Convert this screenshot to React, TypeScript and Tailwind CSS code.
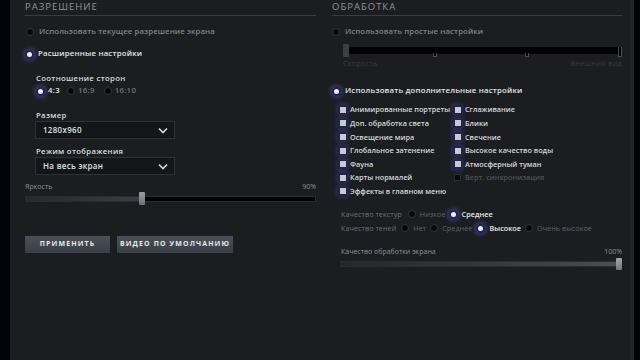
import React from "react";

const F = { fontFamily: '"Open Sans", "Noto Sans", sans-serif' };

function Radio({ on }: { on?: boolean }) {
  if (on)
    return (
      <span className="relative flex h-[9px] w-[9px] shrink-0 items-center justify-center rounded-full bg-[#23244a] shadow-[0_0_4px_2px_rgba(95,95,210,0.45)]">
        <span className="h-[5px] w-[5px] rounded-full bg-[#eceefa]" />
      </span>
    );
  return <span className="h-[8px] w-[8px] shrink-0 rounded-full border border-[#35373c] bg-[#050506]" />;
}

function Check({ on = true }: { on?: boolean }) {
  if (on)
    return (
      <span className="flex h-[9px] w-[9px] shrink-0 items-center justify-center bg-[#20224a] shadow-[0_0_4px_1px_rgba(80,80,190,0.45)]">
        <span className="h-[6px] w-[6px] bg-[#c8cad2]" />
      </span>
    );
  return (
    <span className="flex h-[9px] w-[9px] shrink-0 items-center justify-center">
      <span className="h-[7px] w-[7px] border border-[#2a2c30] bg-[#08090a]" />
    </span>
  );
}

function Chevron() {
  return (
    <svg width="10" height="7" viewBox="0 0 10 7" className="shrink-0">
      <path d="M1 1.5 L5 5.5 L9 1.5" stroke="#d8dadd" strokeWidth="1.6" fill="none" />
    </svg>
  );
}

function Select({ text }: { text: string }) {
  return (
    <div className="ml-[10px] flex h-[18px] w-[140px] items-center justify-between border border-[#2f3136] bg-[#141519] pl-[7px] pr-[6px]">
      <span className="text-[8px] font-semibold tracking-[0.3px] text-[#dfe1e4]">{text}</span>
      <Chevron />
    </div>
  );
}

const leftChecks = [
  "Анимированные портреты",
  "Доп. обработка света",
  "Освещение мира",
  "Глобальное затенение",
  "Фауна",
  "Карты нормалей",
  "Эффекты в главном меню",
];
const rightChecks = ["Сглаживание", "Блики", "Свечение", "Высокое качество воды", "Атмосферный туман"];

export default function App() {
  return (
    <div className="flex h-[360px] w-[640px] overflow-hidden bg-[#000307]" style={F}>
      <div className="w-[10px] shrink-0 bg-[#010409]" />
      <div className="flex flex-1 gap-[16px] bg-[#1c1d21] pl-[15px] pr-[8px]">
        {/* LEFT */}
        <div className="flex w-[291px] shrink-0 flex-col">
          <div className="h-[16px] border-b border-[#3a3c41]">
            <div className="pt-[1px] text-[9.5px] leading-[12px] tracking-[1px] text-[#8f9399]">РАЗРЕШЕНИЕ</div>
          </div>
          <div className="mt-[11px] flex h-[10px] items-center gap-[5px] pl-[1px]">
            <Radio />
            <span className="text-[7.8px] font-semibold tracking-[0.1px] text-[#7f8288]">
              Использовать текущее разрешение экрана
            </span>
          </div>
          <div className="mt-[12px] flex h-[10px] items-center gap-[4px] pl-[0px]">
            <Radio on />
            <span className="text-[7.8px] font-semibold tracking-[0.2px] text-[#e3e5e8]">Расширенные настройки</span>
          </div>
          <div className="mt-[14px] h-[10px] pl-[11px] text-[7.8px] font-semibold leading-[10px] tracking-[0.3px] text-[#d9dbde]">
            Соотношение сторон
          </div>
          <div className="mt-[3px] flex h-[10px] items-center pl-[11px] text-[7.8px] font-semibold tracking-[0.3px]">
            <Radio on />
            <span className="ml-[3px] text-[#e3e5e8]">4:3</span>
            <span className="ml-[7px]" />
            <Radio />
            <span className="ml-[3px] text-[#6f7278]">16:9</span>
            <span className="ml-[9px]" />
            <Radio />
            <span className="ml-[3px] text-[#6f7278]">16:10</span>
          </div>
          <div className="mt-[14px] h-[10px] pl-[11px] text-[7.8px] font-semibold leading-[10px] tracking-[0.3px] text-[#d9dbde]">
            Размер
          </div>
          <div className="mt-[1px]">
            <Select text="1280x960" />
          </div>
          <div className="mt-[7px] h-[10px] pl-[11px] text-[7.8px] font-semibold leading-[10px] tracking-[0.3px] text-[#d9dbde]">
            Режим отображения
          </div>
          <div className="mt-[1px]">
            <Select text="На весь экран" />
          </div>
          <div className="mt-[7px] flex h-[9px] items-center justify-between text-[7px] leading-[9px] text-[#8e9196]">
            <span>Яркость</span>
            <span>90%</span>
          </div>
          <div className="relative mt-[1px] h-[14px]">
            <div className="absolute left-0 right-0 top-[4px] flex h-[6px] border border-[#2a2c30] bg-[#020203]">
              <div className="h-full w-[116px] bg-gradient-to-r from-[#26282b] to-[#3a3d41]" />
            </div>
            <div className="absolute left-[114px] top-0 h-[13px] w-[6px] rounded-[1px] bg-gradient-to-b from-[#9a9da2] to-[#6d7075]" />
          </div>
          <div className="mt-[30px] flex gap-[7px]">
            <div className="flex h-[17px] w-[85px] items-center justify-center bg-gradient-to-b from-[#4b5059] to-[#3a3e46] text-[7px] font-bold tracking-[1.1px] text-[#e6e8ea]">
              ПРИМЕНИТЬ
            </div>
            <div className="flex h-[17px] w-[116px] items-center justify-center bg-gradient-to-b from-[#4b5059] to-[#3a3e46] text-[7px] font-bold tracking-[1.1px] text-[#e6e8ea]">
              ВИДЕО ПО УМОЛЧАНИЮ
            </div>
          </div>
        </div>

        {/* RIGHT */}
        <div className="flex w-[290px] shrink-0 flex-col">
          <div className="h-[16px] border-b border-[#3a3c41]">
            <div className="pt-[1px] text-[9.5px] leading-[12px] tracking-[1px] text-[#8f9399]">ОБРАБОТКА</div>
          </div>
          <div className="mt-[11px] flex h-[10px] items-center gap-[5px] pl-[0px]">
            <Radio />
            <span className="text-[7.8px] font-semibold tracking-[0.1px] text-[#7f8288]">Использовать простые настройки</span>
          </div>
          <div className="relative ml-[11px] mt-[6px] h-[15px]">
            <div className="absolute left-[5px] right-0 top-[4px] h-[7px] bg-[#020203]" />
            <div className="absolute left-[90px] top-[10px] h-[4px] w-[4px] border border-t-0 border-[#4a4d52] bg-[#020203]" />
            <div className="absolute left-[182px] top-[10px] h-[4px] w-[4px] border border-t-0 border-[#4a4d52] bg-[#020203]" />
            <div className="absolute right-0 top-[4px] h-[10px] w-[4px] border border-t-0 border-[#4a4d52] bg-[#020203]" />
            <div className="absolute left-0 top-[1px] h-[13px] w-[6px] rounded-[1px] bg-[#3b3e43]" />
          </div>
          <div className="ml-[11px] mt-[2px] flex h-[8px] items-center justify-between text-[7px] leading-[8px] tracking-[0.4px] text-[#393c41]">
            <span>Скорость</span>
            <span>Внешний вид</span>
          </div>
          <div className="mt-[18px] flex h-[10px] items-center gap-[4px] pl-[0px]">
            <Radio on />
            <span className="text-[7.8px] font-semibold tracking-[0.2px] text-[#e3e5e8]">Использовать дополнительные настройки</span>
          </div>
          <div className="mt-[7px] flex pl-[6px]">
            <div className="flex w-[115px] flex-col">
              {leftChecks.map((t) => (
                <div key={t} className="flex h-[13.6px] items-center gap-[3px]">
                  <Check />
                  <span className="whitespace-nowrap text-[7.3px] font-semibold tracking-[0px] text-[#d6d8dc]">{t}</span>
                </div>
              ))}
            </div>
            <div className="flex flex-col">
              {rightChecks.map((t) => (
                <div key={t} className="flex h-[13.6px] items-center gap-[3px]">
                  <Check />
                  <span className="whitespace-nowrap text-[7.3px] font-semibold tracking-[0px] text-[#d6d8dc]">{t}</span>
                </div>
              ))}
              <div className="flex h-[13.6px] items-center gap-[3px]">
                <Check on={false} />
                <span className="whitespace-nowrap text-[7.3px] font-semibold tracking-[0px] text-[#4c4f54]">
                  Верт. синхронизация
                </span>
              </div>
            </div>
          </div>
          <div className="mt-[11px] flex h-[10px] items-center pl-[9px] text-[7.3px] tracking-[0px]">
            <span className="text-[#6d7075]">Качество текстур</span>
            <span className="ml-[6px]" />
            <Radio />
            <span className="ml-[4px] text-[#5f6268]">Низкое</span>
            <span className="ml-[3px]" />
            <Radio on />
            <span className="ml-[4px] font-semibold text-[#e6e8eb]">Среднее</span>
          </div>
          <div className="mt-[4px] flex h-[10px] items-center pl-[9px] text-[7.3px] tracking-[0px]">
            <span className="text-[#6d7075]">Качество теней</span>
            <span className="ml-[5px]" />
            <Radio />
            <span className="ml-[4px] text-[#5f6268]">Нет</span>
            <span className="ml-[4px]" />
            <Radio />
            <span className="ml-[4px] text-[#5f6268]">Среднее</span>
            <span className="ml-[4px]" />
            <Radio on />
            <span className="ml-[4px] font-semibold text-[#e6e8eb]">Высокое</span>
            <span className="ml-[4px]" />
            <Radio />
            <span className="ml-[4px] text-[#5f6268]">Очень высокое</span>
          </div>
          <div className="mt-[14px] flex h-[9px] items-center justify-between pl-[9px] text-[7px] leading-[9px] text-[#8e9196]">
            <span>Качество обработки экрана</span>
            <span>100%</span>
          </div>
          <div className="relative ml-[8px] mt-[2px] h-[12px]">
            <div className="absolute left-0 right-[4px] top-[3px] h-[6px] border border-[#2a2c30] bg-gradient-to-r from-[#24262a] via-[#34373b] to-[#4a4d51]" />
            <div className="absolute right-0 top-0 h-[12px] w-[6px] rounded-[1px] bg-gradient-to-b from-[#a3a6ab] to-[#74777c]" />
          </div>
        </div>
      </div>
      <div className="w-[4px] shrink-0 bg-[#222428]" />
      <div className="w-[10px] shrink-0 bg-[#000307]" />
    </div>
  );
}
